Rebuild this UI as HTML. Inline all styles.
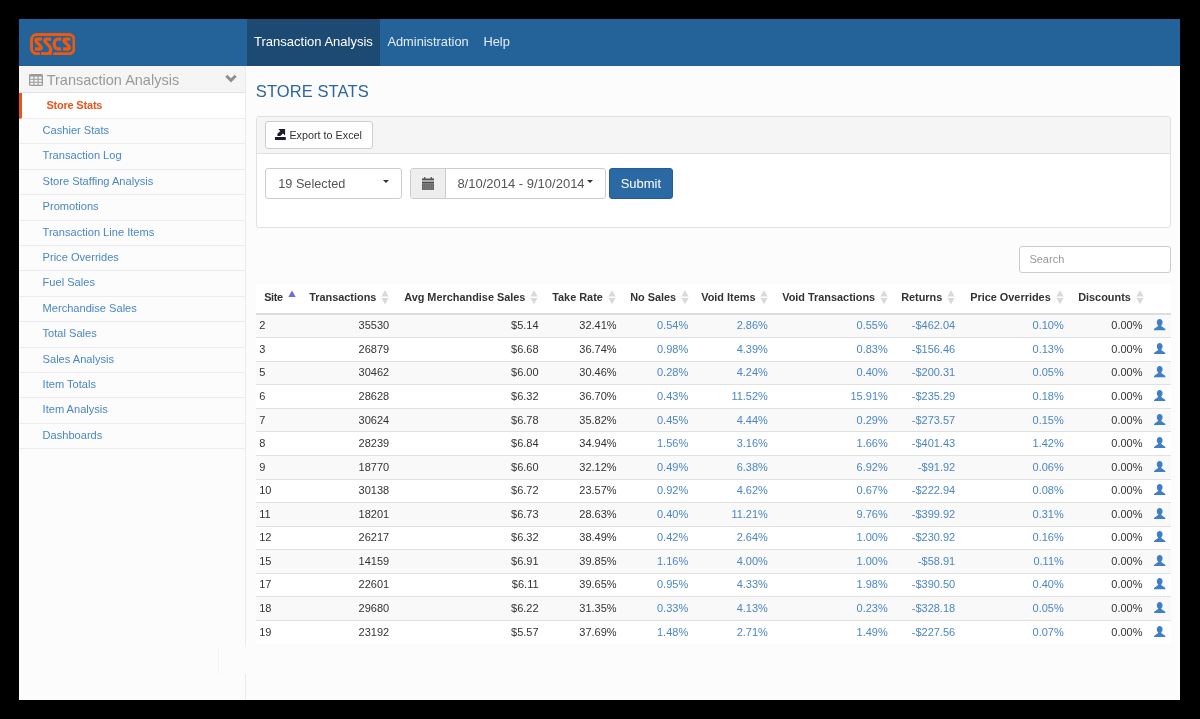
<!DOCTYPE html>
<html>
<head>
<meta charset="utf-8">
<title>Store Stats</title>
<style>
*{box-sizing:border-box;margin:0;padding:0}
html,body{width:1200px;height:719px;overflow:hidden;background:#000}
body{font-family:"Liberation Sans",sans-serif;font-size:11px;color:#333;position:relative}
#app{filter:blur(.55px);position:absolute;left:19.400px;top:19.100px;width:1160.900px;height:680.500px;background:#fcfcfc;overflow:hidden}
#hdr{position:absolute;left:0;top:0;width:1162px;height:46.500px;z-index:2;background:#23639a}
#logo{position:absolute;left:10.4px;top:13.8px}
#nav{position:absolute;left:227.500px;top:0;height:46.500px;display:flex}
#nav a{display:block;height:46.500px;line-height:46px;padding:0 7.400px;font-size:12.830px;color:#e6edf5;text-decoration:none;white-space:nowrap}
#nav a.act{background:#1c4a73;color:#fff;padding:0 7.200px;font-size:13px}
#side{position:absolute;left:0;top:46px;width:227px;height:635px;border-right:1px solid #ebebeb;background:#fcfcfc}
#side .hd{height:28.400px;background:#f5f5f5;border-bottom:1px solid #e2e2e2;position:relative;color:#999;font-size:14.500px;line-height:30px;padding-left:27.300px;white-space:nowrap}
#side .hd svg.t{position:absolute;left:9.400px;top:8.600px}
#side .hd svg.c{position:absolute;left:206px;top:9px}
#side a{display:block;height:25.420px;line-height:23px;padding-left:23.200px;color:#4a86c5;text-decoration:none;font-size:11.080px;border-bottom:1px solid #ececec;white-space:nowrap}
#side a.act{background:#fff;color:#e8561b;font-weight:bold;font-size:11px;line-height:24.400px;letter-spacing:-.2px;border-left:3px solid #e8561b;padding-left:24px}
h1{position:absolute;left:236.400px;top:62.800px;font-size:16.5px;font-weight:normal;color:#2c65a0;line-height:19px;white-space:nowrap;letter-spacing:.1px}
#panel{position:absolute;left:236.200px;top:97.300px;width:915.800px;height:111.800px;border:1px solid #e0e0e0;border-radius:3px;background:#fff}
#panel .ph{height:37px;background:#f5f5f5;border-bottom:1px solid #e0e0e0;border-radius:2px 2px 0 0}
.btn{position:absolute;border:1px solid #ccc;border-radius:3px;background:#fff;white-space:nowrap}
#exp{left:8.500px;top:3.500px;width:108.200px;height:27.800px;line-height:26.200px;font-size:10.800px;color:#333;padding-left:23.300px}
#exp svg{position:absolute;left:9.100px;top:7.300px}
#sel{left:8.500px;top:51px;width:136.800px;height:30.500px;line-height:30.400px;font-size:12.700px;color:#555;padding-left:12.200px}
.caret{position:absolute;width:0;height:0;border-left:3.700px solid transparent;border-right:3.700px solid transparent;border-top:3.700px solid #333}
#dt{left:153.300px;top:51px;width:196px;height:30.600px;line-height:29px;font-size:13px;color:#555;padding-left:46.500px}
#dt .ad{position:absolute;left:0;top:0;width:35px;height:29px;background:#eee;border-right:1px solid #ccc;border-radius:2px 0 0 2px}
#dt .ad svg{position:absolute;left:10.800px;top:7.800px}
#sub{position:absolute;left:352.300px;top:50.400px;width:64px;height:31.200px;border-radius:3px;background:#2b69a4;border:1px solid #255c92;color:#fff;font-size:13px;line-height:29.500px;text-align:center}
#srch{position:absolute;left:1000px;top:227px;width:152px;height:27px;border:1px solid #ccc;border-radius:3px;background:#fff;font-size:11px;color:#999;line-height:25px;padding-left:9px}
table{position:absolute;left:236.200px;top:264.600px;width:915.600px;border-collapse:separate;border-spacing:0;table-layout:fixed;font-size:11px}
th:first-child .so{margin-left:5.200px}
th{height:31px;font-size:10.900px;padding-bottom:2px!important;background:#fff;border-bottom:2px solid #ddd;text-align:left;font-weight:bold;color:#333;padding:0 0 0 8px;white-space:nowrap;vertical-align:middle;position:relative}
td{height:23.550px;border-bottom:1px solid #e1e1e1;text-align:right;padding:0 6px 1.200px 0;white-space:nowrap;vertical-align:middle;color:#333}
tr:nth-child(odd) td{background:#f9f9f9}
tr:nth-child(even) td{background:#fff}
tbody tr:last-child td{border-bottom:none;height:22.800px}
td:first-child{text-align:left;padding-left:3.600px}
th:first-child{padding-left:8.600px}
td:nth-child(2){padding-right:7px}
td:nth-child(3){padding-right:5.6px}
td:nth-child(4){padding-right:5.6px}
td:nth-child(5){padding-right:5px}
td:nth-child(6){padding-right:6.3px}
td:nth-child(7){padding-right:5.4px}
td:nth-child(8){padding-right:7px}
td:nth-child(9){padding-right:6.4px}
td:nth-child(10){padding-right:5.7px}
td.b{color:#4a86c5}
td.i{padding:0;text-align:center}
td.i svg{display:block;margin:0 0 2px 6.200px}
.so{display:inline-block;vertical-align:-4px;margin-left:4.800px}
</style>
</head>
<body>
<div id="app">
<div id="hdr">
<svg id="logo" width="45.5" height="22.3" viewBox="0 0 45.5 22.3"><g fill="none" stroke="#ec5911"><rect x="1.5" y="1.5" width="42.5" height="19.3" rx="5.2" stroke-width="3"/><path d="M10.6 18.5v4" stroke="#23639a" stroke-width="1.3"/><g stroke-width="3.3"><path d="M12 6.1H7.2C5.5 6.100 5.500 7.800 6.500 9L10.500 13.200C11.800 14.600 11.500 16 9.800 16H4.900"/><path d="M21 6.100H16.100C14.400 6.100 14.400 7.800 15.400 9L19.500 13.500C21.500 16 21 20.800 17 20.800H11.400"/><path d="M31.200 6.100H28C23 6.100 23 16 28 16H31.200"/><path d="M40.400 6.100H35.400C33.700 6.100 33.700 7.800 34.700 9L38.700 13.200C40 14.600 39.700 16 38 16H33.100"/></g><path d="M23.600 18.600L21.400 22.500" stroke="#23639a" stroke-width="1.200"/></g></svg>
<div id="nav"><a class="act">Transaction Analysis</a><a>Administration</a><a>Help</a></div>
</div>
<div id="side">
<div class="hd"><svg class="t" width="14" height="12.100" viewBox="0 0 14 12.100"><rect x=".65" y=".65" width="12.700" height="10.800" rx="1.300" fill="none" stroke="#9a9a9a" stroke-width="1.300"/><path d="M.5 1.600h13" stroke="#9a9a9a" stroke-width="2"/><path d="M1 5.200h12M1 8.300h12M4.900 2v9.500M9.100 2v9.500" stroke="#9a9a9a" stroke-width="1.100" fill="none"/></svg>Transaction Analysis<svg class="c" width="12" height="9" viewBox="0 0 12 9"><path d="M1.300 1.800L6 6.400l4.700-4.600" fill="none" stroke="#8f8f8f" stroke-width="2.900"/></svg></div>
<a class="act">Store Stats</a><a>Cashier Stats</a><a>Transaction Log</a><a>Store Staffing Analysis</a><a>Promotions</a><a>Transaction Line Items</a><a>Price Overrides</a><a>Fuel Sales</a><a>Merchandise Sales</a><a>Total Sales</a><a>Sales Analysis</a><a>Item Totals</a><a>Item Analysis</a><a>Dashboards</a>
</div>
<h1>STORE STATS</h1>
<div id="panel">
<div class="ph"></div>
<div class="btn" id="exp"><svg width="10.800" height="11" viewBox="0 0 10.800 11"><path d="M0 8h10.800v3H0z M3.200 0H10.100V6.500L8 4.500 5.300 6.900H2.400V4.700L5.400 2.100z" fill="#1b1b2b"/></svg>Export to Excel</div>
<div class="btn" id="sel">19 Selected<i class="caret" style="left:116.600px;top:10.500px"></i></div>
<div class="btn" id="dt"><span class="ad"><svg width="12" height="13.300" viewBox="0 0 12 13.300"><rect x="1.900" y="0" width="1.500" height="2.200" fill="#666"/><rect x="8.600" y="0" width="1.500" height="2.200" fill="#666"/><rect x="0" y="1.500" width="12" height="2" fill="#505050"/><rect x="0" y="3.500" width="12" height="1.300" fill="#bdbdbd"/><rect x="0" y="4.800" width="12" height="1.500" fill="#4a4a4a"/><rect x="0" y="6.300" width="12" height="7" rx=".5" fill="#666"/><path d="M1.700 6.300v7M3.400 6.300v7M5.100 6.300v7M6.900 6.300v7M8.600 6.300v7M10.300 6.300v7" stroke="#8c8c8c" stroke-width=".6"/></svg></span>8/10/2014 - 9/10/2014<i class="caret" style="left:176px;top:10.500px"></i></div>
<div id="sub">Submit</div>
</div>
<div id="srch">Search</div>
<table>
<colgroup><col style="width:45.600px"><col style="width:95px"><col style="width:148px"><col style="width:78px"><col style="width:71px"><col style="width:81px"><col style="width:119px"><col style="width:69px"><col style="width:108px"><col style="width:78px"><col style="width:23px"></colgroup>
<thead><tr><th><span style="letter-spacing:-.4px">Site</span><svg class="so" width="8" height="15" viewBox="0 0 8 15"><path d="M4 .5L7.700 7H.3z" fill="#6b6fdd"/></svg></th><th>Transactions<svg class="so" width="8" height="15" viewBox="0 0 8 15"><path d="M4 .3L7.600 6.400H.4z M4 14.300L7.600 7.900H.4z" fill="#d9d9d9"/></svg></th><th>Avg Merchandise Sales<svg class="so" width="8" height="15" viewBox="0 0 8 15"><path d="M4 .3L7.600 6.400H.4z M4 14.300L7.600 7.900H.4z" fill="#d9d9d9"/></svg></th><th>Take Rate<svg class="so" width="8" height="15" viewBox="0 0 8 15"><path d="M4 .3L7.600 6.400H.4z M4 14.300L7.600 7.900H.4z" fill="#d9d9d9"/></svg></th><th>No Sales<svg class="so" width="8" height="15" viewBox="0 0 8 15"><path d="M4 .3L7.600 6.400H.4z M4 14.300L7.600 7.900H.4z" fill="#d9d9d9"/></svg></th><th>Void Items<svg class="so" width="8" height="15" viewBox="0 0 8 15"><path d="M4 .3L7.600 6.400H.4z M4 14.300L7.600 7.900H.4z" fill="#d9d9d9"/></svg></th><th>Void Transactions<svg class="so" width="8" height="15" viewBox="0 0 8 15"><path d="M4 .3L7.600 6.400H.4z M4 14.300L7.600 7.900H.4z" fill="#d9d9d9"/></svg></th><th>Returns<svg class="so" width="8" height="15" viewBox="0 0 8 15"><path d="M4 .3L7.600 6.400H.4z M4 14.300L7.600 7.900H.4z" fill="#d9d9d9"/></svg></th><th>Price Overrides<svg class="so" width="8" height="15" viewBox="0 0 8 15"><path d="M4 .3L7.600 6.400H.4z M4 14.300L7.600 7.900H.4z" fill="#d9d9d9"/></svg></th><th>Discounts<svg class="so" width="8" height="15" viewBox="0 0 8 15"><path d="M4 .3L7.600 6.400H.4z M4 14.300L7.600 7.900H.4z" fill="#d9d9d9"/></svg></th><th></th></tr></thead>
<tbody id="tb">
<tr><td>2</td><td>35530</td><td>$5.14</td><td>32.41%</td><td class="b">0.54%</td><td class="b">2.86%</td><td class="b">0.55%</td><td class="b">-$462.04</td><td class="b">0.10%</td><td>0.00%</td><td class="i"><svg class="u" width="11.400" height="11.200" viewBox="0 0 12 12" preserveAspectRatio="none"><path d="M6 0C7.800 0 9.050 1.500 9.050 3.600 9.050 5.300 8.300 6.500 7.600 7V7.500L11.400 10.100C11.800 10.400 12 10.800 12 11.300V12H0V11.300C0 10.800.2 10.400.6 10.100L4.400 7.500V7C3.700 6.500 2.950 5.300 2.950 3.600 2.950 1.500 4.200 0 6 0z" fill="#3f7fc4"/></svg></td></tr>
<tr><td>3</td><td>26879</td><td>$6.68</td><td>36.74%</td><td class="b">0.98%</td><td class="b">4.39%</td><td class="b">0.83%</td><td class="b">-$156.46</td><td class="b">0.13%</td><td>0.00%</td><td class="i"><svg class="u" width="11.400" height="11.200" viewBox="0 0 12 12" preserveAspectRatio="none"><path d="M6 0C7.800 0 9.050 1.500 9.050 3.600 9.050 5.300 8.300 6.500 7.600 7V7.500L11.400 10.100C11.800 10.400 12 10.800 12 11.300V12H0V11.300C0 10.800.2 10.400.6 10.100L4.400 7.500V7C3.700 6.500 2.950 5.300 2.950 3.600 2.950 1.500 4.200 0 6 0z" fill="#3f7fc4"/></svg></td></tr>
<tr><td>5</td><td>30462</td><td>$6.00</td><td>30.46%</td><td class="b">0.28%</td><td class="b">4.24%</td><td class="b">0.40%</td><td class="b">-$200.31</td><td class="b">0.05%</td><td>0.00%</td><td class="i"><svg class="u" width="11.400" height="11.200" viewBox="0 0 12 12" preserveAspectRatio="none"><path d="M6 0C7.800 0 9.050 1.500 9.050 3.600 9.050 5.300 8.300 6.500 7.600 7V7.500L11.400 10.100C11.800 10.400 12 10.800 12 11.300V12H0V11.300C0 10.800.2 10.400.6 10.100L4.400 7.500V7C3.700 6.500 2.950 5.300 2.950 3.600 2.950 1.500 4.200 0 6 0z" fill="#3f7fc4"/></svg></td></tr>
<tr><td>6</td><td>28628</td><td>$6.32</td><td>36.70%</td><td class="b">0.43%</td><td class="b">11.52%</td><td class="b">15.91%</td><td class="b">-$235.29</td><td class="b">0.18%</td><td>0.00%</td><td class="i"><svg class="u" width="11.400" height="11.200" viewBox="0 0 12 12" preserveAspectRatio="none"><path d="M6 0C7.800 0 9.050 1.500 9.050 3.600 9.050 5.300 8.300 6.500 7.600 7V7.500L11.400 10.100C11.800 10.400 12 10.800 12 11.300V12H0V11.300C0 10.800.2 10.400.6 10.100L4.400 7.500V7C3.700 6.500 2.950 5.300 2.950 3.600 2.950 1.500 4.200 0 6 0z" fill="#3f7fc4"/></svg></td></tr>
<tr><td>7</td><td>30624</td><td>$6.78</td><td>35.82%</td><td class="b">0.45%</td><td class="b">4.44%</td><td class="b">0.29%</td><td class="b">-$273.57</td><td class="b">0.15%</td><td>0.00%</td><td class="i"><svg class="u" width="11.400" height="11.200" viewBox="0 0 12 12" preserveAspectRatio="none"><path d="M6 0C7.800 0 9.050 1.500 9.050 3.600 9.050 5.300 8.300 6.500 7.600 7V7.500L11.400 10.100C11.800 10.400 12 10.800 12 11.300V12H0V11.300C0 10.800.2 10.400.6 10.100L4.400 7.500V7C3.700 6.500 2.950 5.300 2.950 3.600 2.950 1.500 4.200 0 6 0z" fill="#3f7fc4"/></svg></td></tr>
<tr><td>8</td><td>28239</td><td>$6.84</td><td>34.94%</td><td class="b">1.56%</td><td class="b">3.16%</td><td class="b">1.66%</td><td class="b">-$401.43</td><td class="b">1.42%</td><td>0.00%</td><td class="i"><svg class="u" width="11.400" height="11.200" viewBox="0 0 12 12" preserveAspectRatio="none"><path d="M6 0C7.800 0 9.050 1.500 9.050 3.600 9.050 5.300 8.300 6.500 7.600 7V7.500L11.400 10.100C11.800 10.400 12 10.800 12 11.300V12H0V11.300C0 10.800.2 10.400.6 10.100L4.400 7.500V7C3.700 6.500 2.950 5.300 2.950 3.600 2.950 1.500 4.200 0 6 0z" fill="#3f7fc4"/></svg></td></tr>
<tr><td>9</td><td>18770</td><td>$6.60</td><td>32.12%</td><td class="b">0.49%</td><td class="b">6.38%</td><td class="b">6.92%</td><td class="b">-$91.92</td><td class="b">0.06%</td><td>0.00%</td><td class="i"><svg class="u" width="11.400" height="11.200" viewBox="0 0 12 12" preserveAspectRatio="none"><path d="M6 0C7.800 0 9.050 1.500 9.050 3.600 9.050 5.300 8.300 6.500 7.600 7V7.500L11.400 10.100C11.800 10.400 12 10.800 12 11.300V12H0V11.300C0 10.800.2 10.400.6 10.100L4.400 7.500V7C3.700 6.500 2.950 5.300 2.950 3.600 2.950 1.500 4.200 0 6 0z" fill="#3f7fc4"/></svg></td></tr>
<tr><td>10</td><td>30138</td><td>$6.72</td><td>23.57%</td><td class="b">0.92%</td><td class="b">4.62%</td><td class="b">0.67%</td><td class="b">-$222.94</td><td class="b">0.08%</td><td>0.00%</td><td class="i"><svg class="u" width="11.400" height="11.200" viewBox="0 0 12 12" preserveAspectRatio="none"><path d="M6 0C7.800 0 9.050 1.500 9.050 3.600 9.050 5.300 8.300 6.500 7.600 7V7.500L11.400 10.100C11.800 10.400 12 10.800 12 11.300V12H0V11.300C0 10.800.2 10.400.6 10.100L4.400 7.500V7C3.700 6.500 2.950 5.300 2.950 3.600 2.950 1.500 4.200 0 6 0z" fill="#3f7fc4"/></svg></td></tr>
<tr><td>11</td><td>18201</td><td>$6.73</td><td>28.63%</td><td class="b">0.40%</td><td class="b">11.21%</td><td class="b">9.76%</td><td class="b">-$399.92</td><td class="b">0.31%</td><td>0.00%</td><td class="i"><svg class="u" width="11.400" height="11.200" viewBox="0 0 12 12" preserveAspectRatio="none"><path d="M6 0C7.800 0 9.050 1.500 9.050 3.600 9.050 5.300 8.300 6.500 7.600 7V7.500L11.400 10.100C11.800 10.400 12 10.800 12 11.300V12H0V11.300C0 10.800.2 10.400.6 10.100L4.400 7.500V7C3.700 6.500 2.950 5.300 2.950 3.600 2.950 1.500 4.200 0 6 0z" fill="#3f7fc4"/></svg></td></tr>
<tr><td>12</td><td>26217</td><td>$6.32</td><td>38.49%</td><td class="b">0.42%</td><td class="b">2.64%</td><td class="b">1.00%</td><td class="b">-$230.92</td><td class="b">0.16%</td><td>0.00%</td><td class="i"><svg class="u" width="11.400" height="11.200" viewBox="0 0 12 12" preserveAspectRatio="none"><path d="M6 0C7.800 0 9.050 1.500 9.050 3.600 9.050 5.300 8.300 6.500 7.600 7V7.500L11.400 10.100C11.800 10.400 12 10.800 12 11.300V12H0V11.300C0 10.800.2 10.400.6 10.100L4.400 7.500V7C3.700 6.500 2.950 5.300 2.950 3.600 2.950 1.500 4.200 0 6 0z" fill="#3f7fc4"/></svg></td></tr>
<tr><td>15</td><td>14159</td><td>$6.91</td><td>39.85%</td><td class="b">1.16%</td><td class="b">4.00%</td><td class="b">1.00%</td><td class="b">-$58.91</td><td class="b">0.11%</td><td>0.00%</td><td class="i"><svg class="u" width="11.400" height="11.200" viewBox="0 0 12 12" preserveAspectRatio="none"><path d="M6 0C7.800 0 9.050 1.500 9.050 3.600 9.050 5.300 8.300 6.500 7.600 7V7.500L11.400 10.100C11.800 10.400 12 10.800 12 11.300V12H0V11.300C0 10.800.2 10.400.6 10.100L4.400 7.500V7C3.700 6.500 2.950 5.300 2.950 3.600 2.950 1.500 4.200 0 6 0z" fill="#3f7fc4"/></svg></td></tr>
<tr><td>17</td><td>22601</td><td>$6.11</td><td>39.65%</td><td class="b">0.95%</td><td class="b">4.33%</td><td class="b">1.98%</td><td class="b">-$390.50</td><td class="b">0.40%</td><td>0.00%</td><td class="i"><svg class="u" width="11.400" height="11.200" viewBox="0 0 12 12" preserveAspectRatio="none"><path d="M6 0C7.800 0 9.050 1.500 9.050 3.600 9.050 5.300 8.300 6.500 7.600 7V7.500L11.400 10.100C11.800 10.400 12 10.800 12 11.300V12H0V11.300C0 10.800.2 10.400.6 10.100L4.400 7.500V7C3.700 6.500 2.950 5.300 2.950 3.600 2.950 1.500 4.200 0 6 0z" fill="#3f7fc4"/></svg></td></tr>
<tr><td>18</td><td>29680</td><td>$6.22</td><td>31.35%</td><td class="b">0.33%</td><td class="b">4.13%</td><td class="b">0.23%</td><td class="b">-$328.18</td><td class="b">0.05%</td><td>0.00%</td><td class="i"><svg class="u" width="11.400" height="11.200" viewBox="0 0 12 12" preserveAspectRatio="none"><path d="M6 0C7.800 0 9.050 1.500 9.050 3.600 9.050 5.300 8.300 6.500 7.600 7V7.500L11.400 10.100C11.800 10.400 12 10.800 12 11.300V12H0V11.300C0 10.800.2 10.400.6 10.100L4.400 7.500V7C3.700 6.500 2.950 5.300 2.950 3.600 2.950 1.500 4.200 0 6 0z" fill="#3f7fc4"/></svg></td></tr>
<tr><td>19</td><td>23192</td><td>$5.57</td><td>37.69%</td><td class="b">1.48%</td><td class="b">2.71%</td><td class="b">1.49%</td><td class="b">-$227.56</td><td class="b">0.07%</td><td>0.00%</td><td class="i"><svg class="u" width="11.400" height="11.200" viewBox="0 0 12 12" preserveAspectRatio="none"><path d="M6 0C7.800 0 9.050 1.500 9.050 3.600 9.050 5.300 8.300 6.500 7.600 7V7.500L11.400 10.100C11.800 10.400 12 10.800 12 11.300V12H0V11.300C0 10.800.2 10.400.6 10.100L4.400 7.500V7C3.700 6.500 2.950 5.300 2.950 3.600 2.950 1.500 4.200 0 6 0z" fill="#3f7fc4"/></svg></td></tr>
</tbody>
</table>
<div style="position:absolute;left:199px;top:628px;width:40px;height:27px;background:#fcfcfc;border-left:1px solid #f4f4f4"></div>
</div>
</body>
</html>
